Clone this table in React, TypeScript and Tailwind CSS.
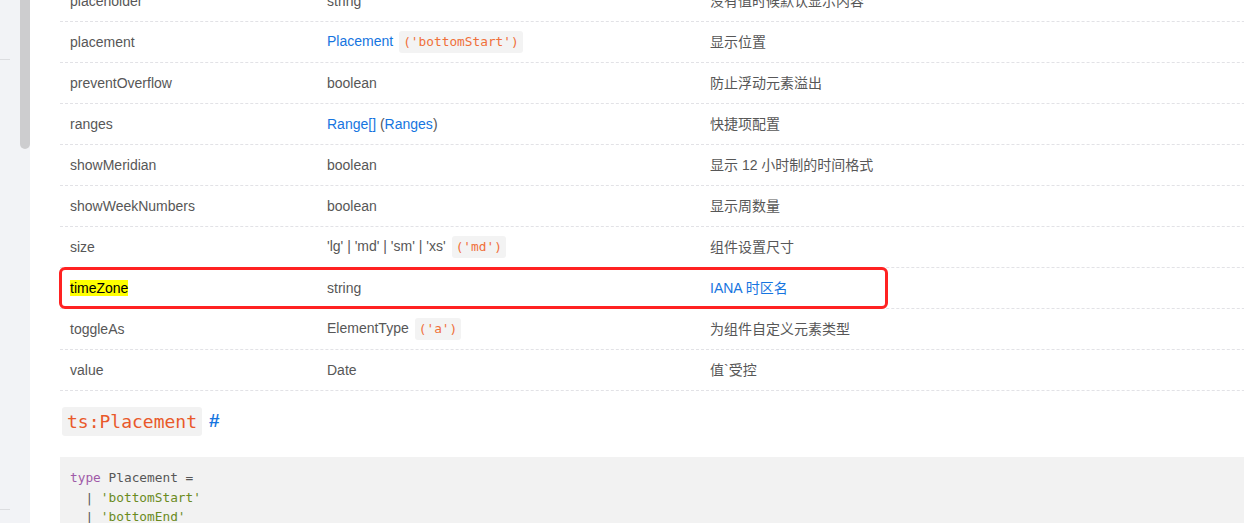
import React from "react";

const sans = { fontFamily: '"Liberation Sans", "Noto Sans CJK SC", Arial, sans-serif' };
const mono = { fontFamily: '"DejaVu Sans Mono", "Liberation Mono", monospace' };

function Code({ children }: { children: React.ReactNode }) {
  return (
    <span
      className="ml-[6px] inline-block h-[22px] rounded-[3px] bg-[#f3f3f3] px-[4px] align-baseline text-[12.8px] leading-[22px] text-[#f0703a]"
      style={mono}
    >
      {children}
    </span>
  );
}

const Link = ({ children }: { children: React.ReactNode }) => (
  <span className="text-[#1675e0]">{children}</span>
);

type Row = { name: React.ReactNode; type: React.ReactNode; desc: React.ReactNode };

const rows: Row[] = [
  { name: "placeholder", type: "string", desc: "没有值时候默认显示内容" },
  {
    name: "placement",
    type: (
      <>
        <Link>Placement</Link>
        <Code>('bottomStart')</Code>
      </>
    ),
    desc: "显示位置",
  },
  { name: "preventOverflow", type: "boolean", desc: "防止浮动元素溢出" },
  {
    name: "ranges",
    type: (
      <>
        <Link>Range[]</Link>
        {" ("}
        <Link>Ranges</Link>
        {")"}
      </>
    ),
    desc: "快捷项配置",
  },
  { name: "showMeridian", type: "boolean", desc: "显示 12 小时制的时间格式" },
  { name: "showWeekNumbers", type: "boolean", desc: "显示周数量" },
  {
    name: "size",
    type: (
      <>
        'lg' | 'md' | 'sm' | 'xs'
        <Code>('md')</Code>
      </>
    ),
    desc: "组件设置尺寸",
  },
  {
    name: <span className="bg-[#ffff00] text-black">timeZone</span>,
    type: "string",
    desc: <Link>IANA 时区名</Link>,
  },
  {
    name: "toggleAs",
    type: (
      <>
        ElementType
        <Code>('a')</Code>
      </>
    ),
    desc: "为组件自定义元素类型",
  },
  { name: "value", type: "Date", desc: "值`受控" },
];

export default function App() {
  return (
    <div className="flex h-[523px] w-[1244px] overflow-hidden bg-white" style={sans}>
      {/* sidebar */}
      <div className="relative w-[30px] shrink-0 bg-[#f2f3f6]">
        <div className="absolute left-0 top-[59px] h-px w-[10px] bg-[#dcdde0]" />
        <div className="absolute left-0 top-[509px] h-px w-[10px] bg-[#dcdde0]" />
        <div className="absolute left-[20px] top-0 h-[149px] w-[10px] rounded-b-[5px] bg-[#cdcdcf]" />
      </div>

      {/* content */}
      <div className="flex min-w-0 flex-1 flex-col pl-[30px]">
        <div className="relative mt-[-19px] w-[1300px] text-[14px] text-[#575757]">
          {rows.map((r, i) => (
            <div key={i} className="flex h-[41px] items-center border-b border-dashed border-[#e2e2e6]">
              <div className="w-[257px] shrink-0 pl-[10px]">{r.name}</div>
              <div className="w-[383px] shrink-0 pl-[10px]">{r.type}</div>
              <div className="flex-1 pl-[10px]">{r.desc}</div>
            </div>
          ))}
          <div className="pointer-events-none absolute left-[-1px] top-[286px] h-[42px] w-[829px] rounded-[6px] border-[3px] border-[#ff2222]" />
        </div>

        <div className="mt-[16px] flex items-center">
          <span
            className="ml-[2px] inline-flex h-[29px] items-center rounded-[3px] bg-[#f2f2f2] px-[5px] text-[18px] text-[#e9592a]"
            style={mono}
          >
            ts:Placement
          </span>
          <span className="ml-[7px] text-[19px] font-bold text-[#1675e0]" style={sans}>#</span>
        </div>

        <div
          className="mt-[21px] flex-1 whitespace-pre bg-[#f2f2f2] pl-[10px] pt-[11px] text-[12.8px] leading-[19.5px] text-[#575757]"
          style={mono}
        >
          <div>
            <span className="text-[#a05aa8]">type</span> Placement =
          </div>
          <div>
            {"  | "}
            <span className="text-[#6b8b1e]">'bottomStart'</span>
          </div>
          <div>
            {"  | "}
            <span className="text-[#6b8b1e]">'bottomEnd'</span>
          </div>
        </div>
      </div>
    </div>
  );
}
